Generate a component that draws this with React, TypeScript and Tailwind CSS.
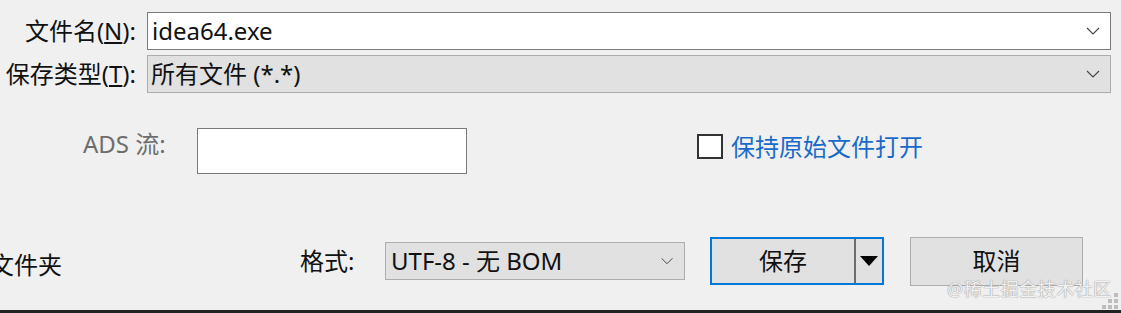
import React from "react";

const FONT = "font-['Noto_Sans','Noto_Sans_CJK_SC',sans-serif]";

function Chevron({ className = "" }: { className?: string }) {
  return (
    <svg width="14" height="8" viewBox="0 0 14 8" className={className}>
      <path d="M1 1 L7 7 L13 1" fill="none" stroke="#444" strokeWidth="1.1" />
    </svg>
  );
}

function Grip() {
  // resize grip in the bottom right corner
  const dots = [
    [12, 0],
    [6, 6],
    [12, 6],
    [0, 12],
    [6, 12],
    [12, 12],
  ];
  return (
    <svg width="17" height="17" viewBox="0 0 17 17">
      {dots.map(([x, y], i) => (
        <rect key={i} x={x} y={y} width="4" height="4" fill="#bdbdbd" />
      ))}
    </svg>
  );
}

export default function App() {
  return (
    <div
      className={`relative w-[1121px] h-[313px] overflow-hidden bg-[#f0f0f0] text-[#111] text-[24px] leading-none ${FONT} flex flex-col`}
    >
      {/* ======== FILE NAME / TYPE ======== */}
      <div className="pt-3 pr-[10px]">
        <div className="flex items-center h-[38px]">
          <div className="w-[147px] pr-[11px] text-right whitespace-nowrap">
            文件名(<u className="underline-offset-2">N</u>):
          </div>
          <div className="flex-1 h-full flex items-center bg-white border border-[#7a7a7a] pl-[4px] pr-[10px]">
            <span className="flex-1">idea64.exe</span>
            <Chevron />
          </div>
        </div>

        <div className="mt-[5px] flex items-center h-[38px]">
          <div className="w-[147px] pr-[11px] text-right whitespace-nowrap">
            保存类型(<u className="underline-offset-2">T</u>):
          </div>
          <div className="flex-1 h-full flex items-center bg-[#e1e1e1] border border-[#adadad] pl-[3px] pr-[10px]">
            <span className="flex-1">所有文件 (*.*)</span>
            <Chevron />
          </div>
        </div>
      </div>

      {/* ======== ADS ROW ======== */}
      <div className="mt-[35px] flex items-start">
        <div className="w-[197px] pl-[83px] pt-[4px] text-[#6d6d6d] whitespace-nowrap">ADS 流:</div>
        <div className="w-[270px] h-[46px] bg-white border border-[#7a7a7a]" />
        <div className="ml-[230px] mt-[6px] flex items-center">
          <div className="w-[26px] h-[25px] bg-white border-2 border-[#333]" />
          <span className="ml-[8px] text-[#1a6bc9]">保持原始文件打开</span>
        </div>
      </div>

      {/* ======== BOTTOM ROW ======== */}
      <div className="mt-[62px] flex items-center h-[50px]">
        <div className="w-[310px] -ml-[10px] pt-[8px] whitespace-nowrap">文件夹</div>
        <div className="w-[85px] whitespace-nowrap">格式:</div>
        <div className="w-[300px] h-[38px] flex items-center bg-[#e1e1e1] border border-[#adadad] pl-[5px] pr-[10px]">
          <span className="flex-1">UTF-8 - 无 BOM</span>
          <Chevron className="scale-90" />
        </div>
        <div className="ml-[25px] w-[174px] h-[48px] flex items-center bg-[#e1e1e1] border-2 border-[#0078d7]">
          <div className="w-[142px] text-center">保存</div>
          <div className="w-[2px] h-[44px] bg-[#6d6d6d]" />
          <div className="flex-1 flex justify-center">
            <svg width="18" height="10" viewBox="0 0 18 10">
              <path d="M0 0 H18 L9 10 Z" fill="#000" />
            </svg>
          </div>
        </div>
        <div className="ml-[26px] w-[173px] h-[49px] flex items-center justify-center bg-[#e1e1e1] border border-[#adadad]">
          取消
        </div>
      </div>

      {/* watermark */}
      <div className="absolute left-[947px] top-[280px] text-[18px] text-[#f2f2f2] tracking-[0.5px] [text-shadow:0_0_1px_#9a9a9a,0_0_1px_#9a9a9a]">
        @稀土掘金技术社区
      </div>
      <div className="absolute right-[2px] bottom-[3px]">
        <Grip />
      </div>

      {/* bottom edge */}
      <div className="mt-auto h-[3px] bg-[#222]" />
    </div>
  );
}
